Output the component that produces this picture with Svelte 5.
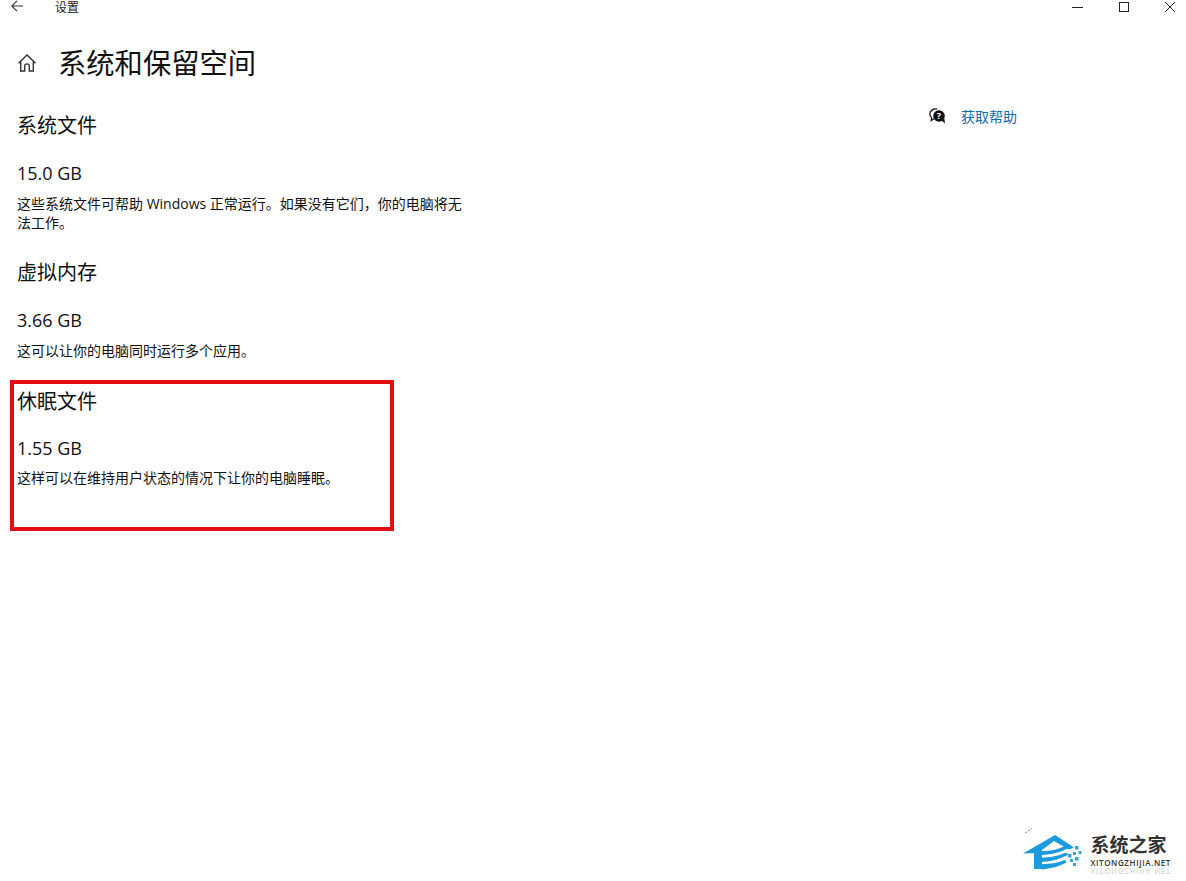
<script lang="ts">
	const top = [
		{ title: '系统文件', size: '15.0 GB', text: '这些系统文件可帮助 Windows 正常运行。如果没有它们，你的电脑将无法工作。' },
		{ title: '虚拟内存', size: '3.66 GB', text: '这可以让你的电脑同时运行多个应用。' }
	];
</script>

<div class="page">
	<header class="titlebar">
		<div class="titlebar-left">
			<svg width="12" height="12" viewBox="0 0 12 12" fill="none" stroke="#333" stroke-width="1.100">
				<path d="M12 6H.8M6 .8L.8 6 6 11.200" />
			</svg>
			<span class="app-name">设置</span>
		</div>
		<div class="window-buttons">
			<svg width="12" height="12" viewBox="0 0 12 12" fill="none" stroke="#222"><path d="M0 6.500H11" /></svg>
			<svg width="12" height="12" viewBox="0 0 12 12" fill="none" stroke="#222"><rect x="1.500" y="1.500" width="9" height="9" /></svg>
			<svg width="12" height="12" viewBox="0 0 12 12" fill="none" stroke="#222"><path d="M1 1l10 10M11 1L1 11" /></svg>
		</div>
	</header>

	<div class="page-head">
		<svg width="18" height="18" viewBox="0 0 18 18" fill="none" stroke="#333" stroke-width="1.400">
			<path d="M.5 9.300L9 1l8.500 8.300M2.700 7.200V17H6.700V12.200a2.300 2.300 0 0 1 4.600 0V17H15.300V7.200" />
		</svg>
		<h1>系统和保留空间</h1>
	</div>

	<main class="content">
		<div class="sections">
			{#each top as s}
				<section class="block">
					<h2>{s.title}</h2>
					<div class="size">{s.size}</div>
					<p>{s.text}</p>
				</section>
			{/each}
			<section class="block marked">
				<h2>休眠文件</h2>
				<div class="size">1.55 GB</div>
				<p>这样可以在维持用户状态的情况下让你的电脑睡眠。</p>
			</section>
		</div>
		<a class="help" href="#help">
			<svg width="18" height="16" viewBox="0 0 18 16">
				<path d="M8 1C4 .6.8 2.800.8 6c0 1.600.7 2.800 1.900 3.700L2.200 12.500l3-1.800" fill="none" stroke="#111" stroke-width="1.300" />
				<circle cx="10" cy="8" r="5.800" fill="#111" />
				<path d="M12.500 12.500l3.500 3-.6-5z" fill="#111" />
				<text x="10" y="11.200" class="q">?</text>
			</svg>
			<span>获取帮助</span>
		</a>
	</main>

	<div class="watermark">
		<svg width="70" height="50" viewBox="0 0 70 50">
			<path d="M7 8l2-1M10 6l2-1M13 4l1-1" fill="none" stroke="#7d8f9a" stroke-width="1" />
			<path d="M5 28.500L37 10l19 12.500-5 2-15-8.500-16 12z" fill="#1b9ae0" />
			<path d="M16 27l8-4V44H16z" fill="#1b9ae0" />
			<path d="M24 26c8 0 15-1 23-5l3.500 2c-8 4.500-17 6.500-26.500 7zM24 32.500c8 0 15-1 24-5l2.500 2c-8 4.500-17 7-26.500 7.500zM24 39c8 0 15-1 23-4l1.500 2.500c-8 4-15.500 6-24.500 7z" fill="#1b9ae0" />
			<g fill="#2fa5e8">
				<rect x="57" y="21" width="3.500" height="3.500" /><rect x="60.500" y="26" width="3" height="3" /><rect x="55" y="27" width="3" height="3" />
				<rect x="50" y="29" width="3.500" height="3.500" /><rect x="57" y="32" width="3.500" height="3.500" /><rect x="52" y="34" width="3" height="3" />
				<rect x="55" y="38" width="3" height="3" />
			</g>
		</svg>
		<div class="wm-text">
			<div class="wm-cn">系统之家</div>
			<div class="wm-en">XITONGZHIJIA.NET</div>
			<div class="wm-en wm-reflect" aria-hidden="true">XITONGZHIJIA.NET</div>
		</div>
	</div>
</div>

<style>
	:global(body) {
		margin: 0;
		background: #fff;
	}

	.page {
		position: relative;
		height: 881px;
		overflow: hidden;
		color: #111;
		font-family: 'Open Sans', 'Noto Sans CJK SC', sans-serif;
	}

	.titlebar {
		display: flex;
		justify-content: space-between;
		align-items: flex-start;
		height: 16px;
		padding: 0 10px 0 11px;
	}

	.titlebar-left {
		display: flex;
		align-items: flex-start;
	}

	.app-name {
		margin: 1px 0 0 32px;
		font-size: 12px;
		line-height: 14px;
		color: #222;
	}

	.window-buttons {
		display: flex;
		gap: 34px;
		padding-top: 1px;
	}

	.page-head {
		display: flex;
		align-items: center;
		gap: 23px;
		margin-top: 25px;
		padding-left: 18px;
	}

	h1 {
		margin: 0 0 0 -1px;
		font-size: 28.300px;
		line-height: 44px;
		font-weight: 400;
	}

	.content {
		display: flex;
		justify-content: space-between;
		padding: 0 169px 0 17px;
	}

	.sections {
		width: 450px;
		padding-top: 27px;
	}

	.block + .block {
		margin-top: 27px;
	}

	h2 {
		margin: 0;
		font-size: 20px;
		line-height: 28px;
		font-weight: 400;
	}

	.size {
		margin-top: 19px;
		font-size: 18px;
		line-height: 28px;
	}

	p {
		margin: 7px 0 0;
		font-size: 14px;
		line-height: 19px;
	}

	.block.marked {
		box-sizing: border-box;
		width: 384px;
		height: 151px;
		margin: 20px 0 0 -7px;
		padding: 4px 0 0 3px;
		border: 4px solid #e60d12;
	}

	.marked .size {
		margin-top: 18px;
	}

	.marked p {
		margin-top: 6px;
	}

	.help {
		display: flex;
		align-items: center;
		gap: 14px;
		height: 16px;
		margin-top: 23px;
		color: #0f6cb0;
		font-size: 14px;
		text-decoration: none;
	}

	.q {
		fill: #fff;
		font-size: 9px;
		font-weight: 700;
		text-anchor: middle;
	}

	.watermark {
		position: absolute;
		right: 15px;
		top: 825px;
		display: flex;
		gap: 2px;
	}

	.wm-text {
		padding-top: 9px;
	}

	.wm-cn {
		margin-bottom: 2px;
		font-size: 19px;
		line-height: 22px;
		font-weight: 700;
		color: #333;
	}

	.wm-en {
		font-size: 8px;
		line-height: 9px;
		letter-spacing: .6px;
		font-weight: 600;
		color: #333;
	}

	.wm-reflect {
		transform: scaleY(-1);
		opacity: .18;
	}
</style>
